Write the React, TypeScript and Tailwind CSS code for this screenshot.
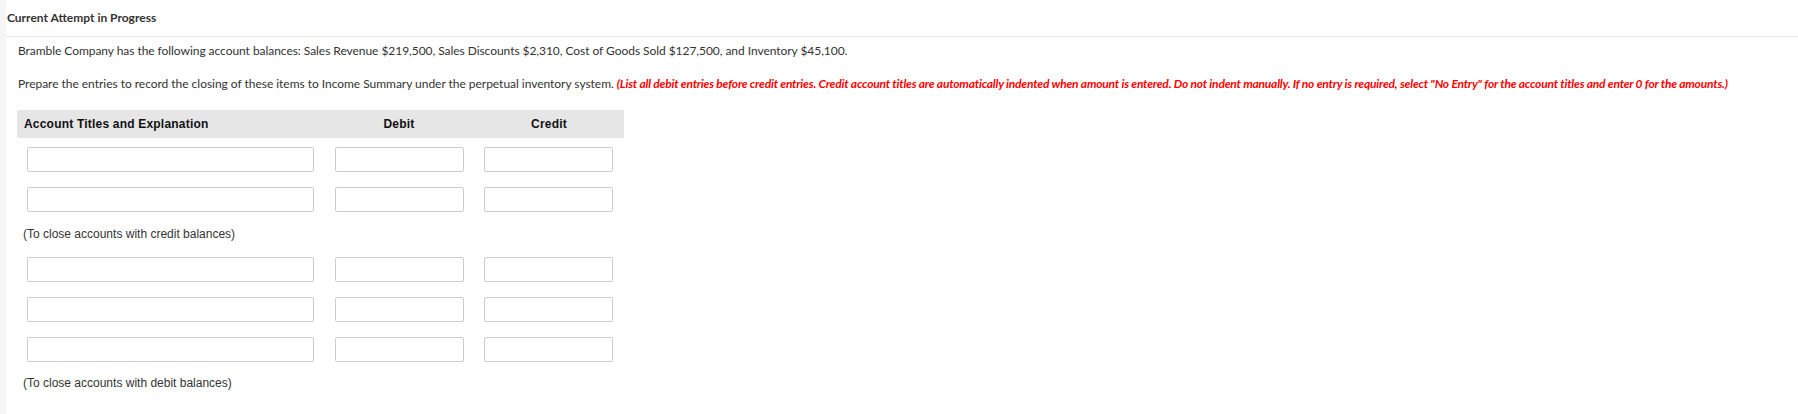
import React from "react";

const lato = { fontFamily: "Lato, 'Open Sans', sans-serif" };

function Input({ w }: { w: string }) {
  return (
    <input
      type="text"
      className={`${w} h-[25px] border border-[#cccccc] rounded-[2px] bg-white outline-none`}
    />
  );
}

function EntryRow() {
  return (
    <div className="grid grid-cols-[307px_150px_150px] h-[40px]">
      <div className="pt-[9px] pl-[10px] pr-[10px]">
        <Input w="w-[287px]" />
      </div>
      <div className="pt-[9px] pl-[11px] pr-[10px]">
        <Input w="w-[129px]" />
      </div>
      <div className="pt-[9px] pl-[10px] pr-[10px]">
        <Input w="w-[129px]" />
      </div>
    </div>
  );
}

function Note({ children, pt }: { children: React.ReactNode; pt: string }) {
  return (
    <div
      className={`${pt} pb-[6px] pl-[6px] text-[12px] leading-[16px] text-[#333333]`}
      style={{ fontFamily: "'Liberation Sans', Arial, sans-serif" }}
    >
      {children}
    </div>
  );
}

export default function App() {
  return (
    <div className="flex w-[1798px] min-h-[414px] bg-white">
      <div className="w-[6px] shrink-0 bg-[#f5f5f5]" />
      <div className="flex-1 min-w-0">
        <div
          className="h-[37px] border-b border-[#e8e8e8] pl-[1px] pt-[9px] text-[12px] leading-[18px] font-bold text-[#333333]"
          style={lato}
        >
          Current Attempt in Progress
        </div>
        <div className="pl-[11px]">
          <p
            className="mt-[5px] ml-[1px] text-[12px] leading-[18px] tracking-[-0.05px] text-[#333333]"
            style={lato}
          >
            Bramble Company has the following account balances: Sales Revenue $219,500, Sales Discounts $2,310, Cost of Goods Sold $127,500, and Inventory $45,100.
          </p>
          <p
            className="mt-[15px] ml-[1px] text-[12px] leading-[18px] tracking-[-0.03px] text-[#333333] whitespace-nowrap"
            style={lato}
          >
            Prepare the entries to record the closing of these items to Income Summary under the perpetual inventory system.{" "}
            <span className="text-[#ff0000] font-bold italic tracking-[-0.2px]">
              (List all debit entries before credit entries. Credit account titles are automatically indented when amount is entered. Do not indent manually. If no entry is required, select "No Entry" for the account titles and enter 0 for the amounts.)
            </span>
          </p>
          <div className="mt-[17px] w-[607px]">
            <div
              className="grid grid-cols-[307px_150px_150px] h-[28px] bg-[#e6e6e6] items-center text-[12px] font-bold tracking-[0.2px] text-[#111111]"
              style={{ fontFamily: "'Liberation Sans', Arial, sans-serif" }}
            >
              <div className="pl-[7px]">Account Titles and Explanation</div>
              <div className="text-center">Debit</div>
              <div className="text-center">Credit</div>
            </div>
            <EntryRow />
            <EntryRow />
            <Note pt="pt-[8px]">(To close accounts with credit balances)</Note>
            <EntryRow />
            <EntryRow />
            <EntryRow />
            <Note pt="pt-[7px]">(To close accounts with debit balances)</Note>
          </div>
        </div>
      </div>
    </div>
  );
}
